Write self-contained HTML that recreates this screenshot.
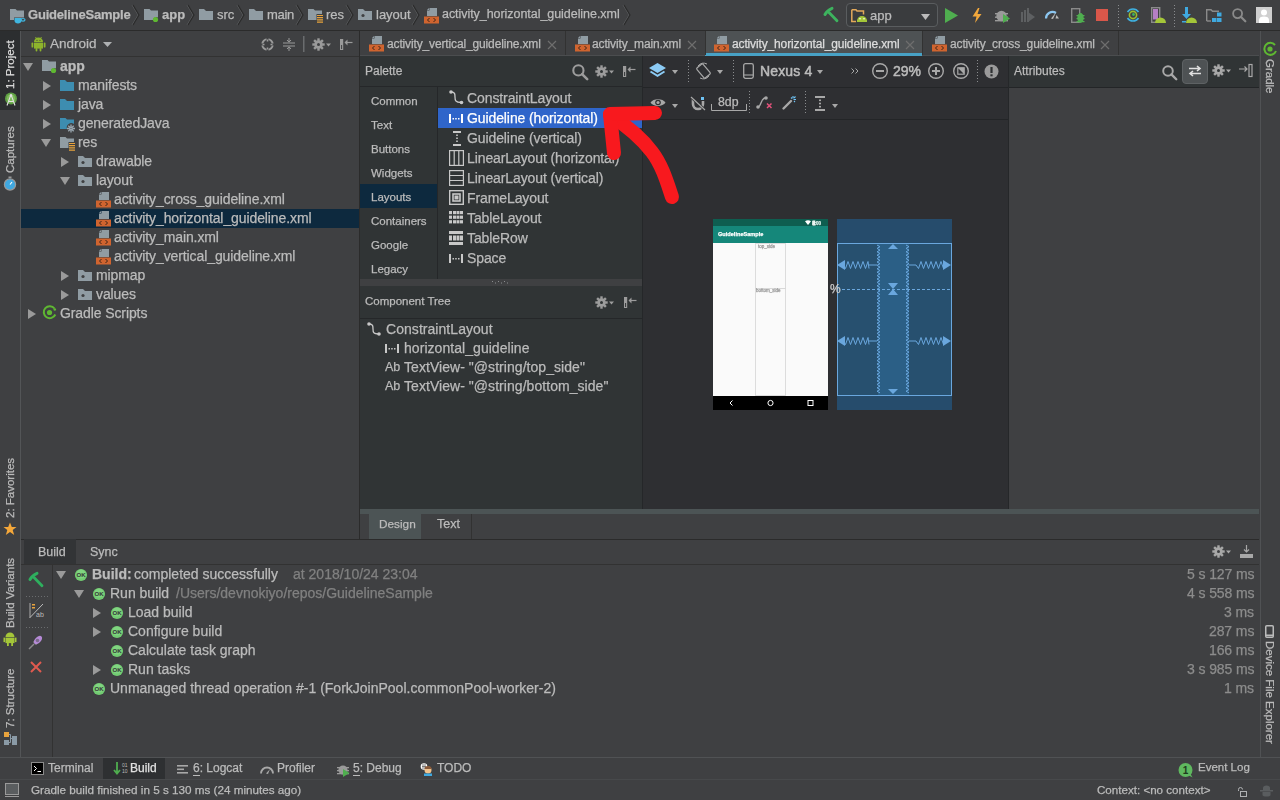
<!DOCTYPE html>
<html><head><meta charset="utf-8">
<style>
*{margin:0;padding:0;box-sizing:border-box}
html,body{width:1280px;height:800px;overflow:hidden;background:#3F4042;font-family:"Liberation Sans",sans-serif;color:#BBBBBB}
.a{position:absolute}
.t{position:absolute;white-space:nowrap;line-height:1;z-index:5;-webkit-text-stroke:0.25px currentColor;will-change:transform}
svg{position:absolute;overflow:visible}
</style></head><body>
<div class="a" style="left:0px;top:0px;width:1280px;height:800px;background:#3F4042;"></div>
<div class="a" style="left:0px;top:30px;width:1280px;height:1px;background:#2B2B2B;"></div>
<div class="a" style="left:20px;top:31px;width:1px;height:726px;background:#535557;"></div>
<div class="a" style="left:0px;top:31px;width:20px;height:79px;background:#2C2E30;"></div>
<div class="a" style="left:21px;top:56px;width:338px;height:1px;background:#323232;"></div>
<div class="a" style="left:359px;top:31px;width:1px;height:508px;background:#2B2B2B;"></div>
<div class="a" style="left:21px;top:209px;width:338px;height:19px;background:#0D293E;"></div>
<div class="a" style="left:360px;top:55px;width:899px;height:1px;background:#4B4D4F;"></div>
<div class="a" style="left:360px;top:56px;width:282px;height:223px;background:#303435;"></div>
<div class="a" style="left:360px;top:86px;width:282px;height:1px;background:#252729;"></div>
<div class="a" style="left:437px;top:87px;width:1px;height:192px;background:#252729;"></div>
<div class="a" style="left:360px;top:279px;width:282px;height:7px;background:#3F4042;"></div>
<div class="a" style="left:360px;top:286px;width:282px;height:224px;background:#303435;"></div>
<div class="a" style="left:360px;top:318px;width:282px;height:1px;background:#252729;"></div>
<div class="a" style="left:642px;top:56px;width:1px;height:454px;background:#252729;"></div>
<div class="a" style="left:643px;top:56px;width:365px;height:454px;background:#2E2F32;"></div>
<div class="a" style="left:1008px;top:56px;width:1px;height:454px;background:#252729;"></div>
<div class="a" style="left:1009px;top:56px;width:250px;height:454px;background:#3F4042;"></div>
<div class="a" style="left:1260px;top:31px;width:1px;height:726px;background:#505254;"></div>
<div class="a" style="left:360px;top:509px;width:899px;height:5px;background:#4C5455;"></div>
<div class="a" style="left:369px;top:514px;width:52px;height:25px;background:#4C5455;"></div>
<div class="a" style="left:471px;top:514px;width:1px;height:25px;background:#323232;"></div>
<div class="a" style="left:21px;top:539px;width:1238px;height:1px;background:#2B2B2B;"></div>
<div class="a" style="left:21px;top:564px;width:1238px;height:1px;background:#323232;"></div>
<div class="a" style="left:52px;top:565px;width:1px;height:192px;background:#323232;"></div>
<div class="a" style="left:0px;top:757px;width:1280px;height:1px;background:#505254;"></div>
<div class="a" style="left:0px;top:779px;width:1280px;height:1px;background:#47494B;"></div>
<div class="t" style="left:28px;top:8.00px;font-size:13px;color:#BBBBBB;font-weight:700;letter-spacing:-0.2px;">GuidelineSample</div>
<div class="t" style="left:162px;top:8.00px;font-size:13px;color:#BBBBBB;font-weight:700;letter-spacing:0px;">app</div>
<div class="t" style="left:217px;top:8.00px;font-size:13px;color:#BBBBBB;font-weight:400;letter-spacing:0px;">src</div>
<div class="t" style="left:267px;top:8.00px;font-size:13px;color:#BBBBBB;font-weight:400;letter-spacing:-0.3px;">main</div>
<div class="t" style="left:326px;top:8.00px;font-size:13px;color:#BBBBBB;font-weight:400;letter-spacing:0px;">res</div>
<div class="t" style="left:376px;top:8.00px;font-size:13px;color:#BBBBBB;font-weight:400;letter-spacing:0px;">layout</div>
<div class="t" style="left:442px;top:8.42px;font-size:12.5px;color:#BBBBBB;font-weight:400;letter-spacing:-0.05px;">activity_horizontal_guideline.xml</div>
<div class="t" style="left:870px;top:9.00px;font-size:13px;color:#BBBBBB;font-weight:400;letter-spacing:0px;">app</div>
<div class="t" style="left:5.25px;top:89px;font-size:11.5px;line-height:11.5px;color:#DDDDDD;font-weight:400;letter-spacing:0px;transform-origin:0 0;transform:rotate(-90deg) translateY(0)">1: Project</div>
<div class="t" style="left:5.25px;top:173px;font-size:11.5px;line-height:11.5px;color:#BBBBBB;font-weight:400;letter-spacing:0px;transform-origin:0 0;transform:rotate(-90deg) translateY(0)">Captures</div>
<div class="t" style="left:5.25px;top:518px;font-size:11.5px;line-height:11.5px;color:#BBBBBB;font-weight:400;letter-spacing:0px;transform-origin:0 0;transform:rotate(-90deg) translateY(0)">2: Favorites</div>
<div class="t" style="left:5.25px;top:628px;font-size:11.5px;line-height:11.5px;color:#BBBBBB;font-weight:400;letter-spacing:0px;transform-origin:0 0;transform:rotate(-90deg) translateY(0)">Build Variants</div>
<div class="t" style="left:5.25px;top:728px;font-size:11.5px;line-height:11.5px;color:#BBBBBB;font-weight:400;letter-spacing:0px;transform-origin:0 0;transform:rotate(-90deg) translateY(0)">7: Structure</div>
<div class="t" style="left:1274.75px;top:59px;font-size:11.5px;line-height:11.5px;color:#BBBBBB;font-weight:400;letter-spacing:0px;transform-origin:0 0;transform:rotate(90deg)">Gradle</div>
<div class="t" style="left:1274.75px;top:641px;font-size:11.5px;line-height:11.5px;color:#BBBBBB;font-weight:400;letter-spacing:0px;transform-origin:0 0;transform:rotate(90deg)">Device File Explorer</div>
<div class="t" style="left:50px;top:36.57px;font-size:13.5px;color:#BBBBBB;font-weight:400;letter-spacing:0px;">Android</div>
<div class="t" style="left:60px;top:59.15px;font-size:14px;color:#BBBBBB;font-weight:700;letter-spacing:0px;">app</div>
<div class="t" style="left:78px;top:78.15px;font-size:14px;color:#BBBBBB;font-weight:400;letter-spacing:-0.1px;">manifests</div>
<div class="t" style="left:78px;top:97.15px;font-size:14px;color:#BBBBBB;font-weight:400;letter-spacing:-0.1px;">java</div>
<div class="t" style="left:78px;top:116.15px;font-size:14px;color:#BBBBBB;font-weight:400;letter-spacing:-0.1px;">generatedJava</div>
<div class="t" style="left:78px;top:135.15px;font-size:14px;color:#BBBBBB;font-weight:400;letter-spacing:-0.1px;">res</div>
<div class="t" style="left:96px;top:154.15px;font-size:14px;color:#BBBBBB;font-weight:400;letter-spacing:-0.1px;">drawable</div>
<div class="t" style="left:96px;top:173.15px;font-size:14px;color:#BBBBBB;font-weight:400;letter-spacing:-0.1px;">layout</div>
<div class="t" style="left:114px;top:192.15px;font-size:14px;color:#BBBBBB;font-weight:400;letter-spacing:-0.1px;">activity_cross_guideline.xml</div>
<div class="t" style="left:114px;top:211.15px;font-size:14px;color:#BBBBBB;font-weight:400;letter-spacing:-0.1px;">activity_horizontal_guideline.xml</div>
<div class="t" style="left:114px;top:230.15px;font-size:14px;color:#BBBBBB;font-weight:400;letter-spacing:-0.1px;">activity_main.xml</div>
<div class="t" style="left:114px;top:249.15px;font-size:14px;color:#BBBBBB;font-weight:400;letter-spacing:-0.1px;">activity_vertical_guideline.xml</div>
<div class="t" style="left:96px;top:268.15px;font-size:14px;color:#BBBBBB;font-weight:400;letter-spacing:-0.1px;">mipmap</div>
<div class="t" style="left:96px;top:287.15px;font-size:14px;color:#BBBBBB;font-weight:400;letter-spacing:-0.1px;">values</div>
<div class="t" style="left:60px;top:306.15px;font-size:14px;color:#BBBBBB;font-weight:400;letter-spacing:-0.1px;">Gradle Scripts</div>
<div class="a" style="left:705px;top:31px;width:217px;height:24px;background:#4E5254;"></div>
<div class="a" style="left:705px;top:53px;width:217px;height:3px;background:#48A2C6;"></div>
<div class="a" style="left:565px;top:31px;width:1px;height:24px;background:#323232;"></div>
<div class="a" style="left:705px;top:31px;width:1px;height:24px;background:#323232;"></div>
<div class="a" style="left:922px;top:31px;width:1px;height:24px;background:#323232;"></div>
<div class="a" style="left:1118px;top:31px;width:1px;height:24px;background:#323232;"></div>
<div class="t" style="left:387px;top:37.84px;font-size:12px;color:#BBBBBB;font-weight:400;letter-spacing:-0.14px;">activity_vertical_guideline.xml</div>
<div class="t" style="left:592px;top:37.84px;font-size:12px;color:#BBBBBB;font-weight:400;letter-spacing:-0.14px;">activity_main.xml</div>
<div class="t" style="left:732px;top:37.84px;font-size:12px;color:#DDDDDD;font-weight:400;letter-spacing:-0.14px;">activity_horizontal_guideline.xml</div>
<div class="t" style="left:950px;top:37.84px;font-size:12px;color:#BBBBBB;font-weight:400;letter-spacing:-0.14px;">activity_cross_guideline.xml</div>
<div class="t" style="left:365px;top:64.84px;font-size:12px;color:#BBBBBB;font-weight:400;letter-spacing:0px;">Palette</div>
<div class="a" style="left:360px;top:184px;width:77px;height:24px;background:#0D293E;"></div>
<div class="t" style="left:371px;top:95.77px;font-size:11.5px;color:#BBBBBB;font-weight:400;letter-spacing:0px;">Common</div>
<div class="t" style="left:371px;top:119.77px;font-size:11.5px;color:#BBBBBB;font-weight:400;letter-spacing:0px;">Text</div>
<div class="t" style="left:371px;top:143.77px;font-size:11.5px;color:#BBBBBB;font-weight:400;letter-spacing:0px;">Buttons</div>
<div class="t" style="left:371px;top:167.77px;font-size:11.5px;color:#BBBBBB;font-weight:400;letter-spacing:0px;">Widgets</div>
<div class="t" style="left:371px;top:191.77px;font-size:11.5px;color:#BBBBBB;font-weight:400;letter-spacing:0px;">Layouts</div>
<div class="t" style="left:371px;top:215.77px;font-size:11.5px;color:#BBBBBB;font-weight:400;letter-spacing:0px;">Containers</div>
<div class="t" style="left:371px;top:239.77px;font-size:11.5px;color:#BBBBBB;font-weight:400;letter-spacing:0px;">Google</div>
<div class="t" style="left:371px;top:263.77px;font-size:11.5px;color:#BBBBBB;font-weight:400;letter-spacing:0px;">Legacy</div>
<div class="a" style="left:438px;top:108px;width:204px;height:20px;background:#2F65CA;"></div>
<div class="t" style="left:467px;top:91.15px;font-size:14px;color:#BBBBBB;font-weight:400;letter-spacing:-0.1px;">ConstraintLayout</div>
<div class="t" style="left:467px;top:111.15px;font-size:14px;color:#FFFFFF;font-weight:400;letter-spacing:-0.1px;">Guideline (horizontal)</div>
<div class="t" style="left:467px;top:131.15px;font-size:14px;color:#BBBBBB;font-weight:400;letter-spacing:-0.1px;">Guideline (vertical)</div>
<div class="t" style="left:467px;top:151.15px;font-size:14px;color:#BBBBBB;font-weight:400;letter-spacing:-0.1px;">LinearLayout (horizontal)</div>
<div class="t" style="left:467px;top:171.15px;font-size:14px;color:#BBBBBB;font-weight:400;letter-spacing:-0.1px;">LinearLayout (vertical)</div>
<div class="t" style="left:467px;top:191.15px;font-size:14px;color:#BBBBBB;font-weight:400;letter-spacing:-0.1px;">FrameLayout</div>
<div class="t" style="left:467px;top:211.15px;font-size:14px;color:#BBBBBB;font-weight:400;letter-spacing:-0.1px;">TableLayout</div>
<div class="t" style="left:467px;top:231.15px;font-size:14px;color:#BBBBBB;font-weight:400;letter-spacing:-0.1px;">TableRow</div>
<div class="t" style="left:467px;top:251.15px;font-size:14px;color:#BBBBBB;font-weight:400;letter-spacing:-0.1px;">Space</div>
<div class="t" style="left:365px;top:296.27px;font-size:11.5px;color:#BBBBBB;font-weight:400;letter-spacing:0px;">Component Tree</div>
<div class="t" style="left:386px;top:322.15px;font-size:14px;color:#BBBBBB;font-weight:400;letter-spacing:0.05px;">ConstraintLayout</div>
<div class="t" style="left:404px;top:341.15px;font-size:14px;color:#BBBBBB;font-weight:400;letter-spacing:0.05px;">horizontal_guideline</div>
<div class="t" style="left:385px;top:361.42px;font-size:12.5px;color:#BBBBBB;font-weight:400;letter-spacing:0px;">Ab</div>
<div class="t" style="left:404px;top:360.15px;font-size:14px;color:#BBBBBB;font-weight:400;letter-spacing:0.05px;">TextView- "@string/top_side"</div>
<div class="t" style="left:385px;top:380.42px;font-size:12.5px;color:#BBBBBB;font-weight:400;letter-spacing:0px;">Ab</div>
<div class="t" style="left:404px;top:379.15px;font-size:14px;color:#BBBBBB;font-weight:400;letter-spacing:0.05px;">TextView- "@string/bottom_side"</div>
<div class="t" style="left:760px;top:64.15px;font-size:14px;color:#BBBBBB;font-weight:400;letter-spacing:0.15px;-webkit-text-stroke:0.5px currentColor">Nexus 4</div>
<div class="t" style="left:893px;top:64.15px;font-size:14px;color:#BBBBBB;font-weight:400;letter-spacing:0px;-webkit-text-stroke:0.5px currentColor">29%</div>
<div class="t" style="left:718px;top:95.59px;font-size:12.3px;color:#BBBBBB;font-weight:400;letter-spacing:0px;">8dp</div>
<div class="t" style="left:1014px;top:64.84px;font-size:12px;color:#BBBBBB;font-weight:400;letter-spacing:0px;">Attributes</div>
<div class="t" style="left:379px;top:519.01px;font-size:11.8px;color:#BBBBBB;font-weight:400;letter-spacing:0px;">Design</div>
<div class="t" style="left:437px;top:518.42px;font-size:12.5px;color:#BBBBBB;font-weight:400;letter-spacing:0px;">Text</div>
<div class="a" style="left:24px;top:539px;width:52px;height:25px;background:#323436;"></div>
<div class="t" style="left:38px;top:546.42px;font-size:12.5px;color:#BBBBBB;font-weight:400;letter-spacing:0px;">Build</div>
<div class="t" style="left:90px;top:546.42px;font-size:12.5px;color:#BBBBBB;font-weight:400;letter-spacing:0px;">Sync</div>
<div class="t" style="left:92px;top:567.15px;font-size:14px;color:#BBBBBB;font-weight:700;letter-spacing:0px;">Build:</div>
<div class="t" style="left:134px;top:567.15px;font-size:14px;color:#BBBBBB;font-weight:400;letter-spacing:0px;">completed successfully</div>
<div class="t" style="left:293px;top:567.15px;font-size:14px;color:#808080;font-weight:400;letter-spacing:0px;">at 2018/10/24 23:04</div>
<div class="t" style="left:110px;top:586.15px;font-size:14px;color:#BBBBBB;font-weight:400;letter-spacing:0px;">Run build</div>
<div class="t" style="left:176px;top:586.15px;font-size:14px;color:#808080;font-weight:400;letter-spacing:0px;">/Users/devnokiyo/repos/GuidelineSample</div>
<div class="t" style="left:128px;top:605.15px;font-size:14px;color:#BBBBBB;font-weight:400;letter-spacing:0px;">Load build</div>
<div class="t" style="left:128px;top:624.15px;font-size:14px;color:#BBBBBB;font-weight:400;letter-spacing:0px;">Configure build</div>
<div class="t" style="left:128px;top:643.15px;font-size:14px;color:#BBBBBB;font-weight:400;letter-spacing:0px;">Calculate task graph</div>
<div class="t" style="left:128px;top:662.15px;font-size:14px;color:#BBBBBB;font-weight:400;letter-spacing:0px;">Run tasks</div>
<div class="t" style="left:110px;top:681.15px;font-size:14px;color:#BBBBBB;font-weight:400;letter-spacing:0px;">Unmanaged thread operation #-1 (ForkJoinPool.commonPool-worker-2)</div>
<div class="t" style="right:26px;top:567.15px;font-size:14px;color:#8C8C8C;font-weight:400;letter-spacing:-0.1px">5 s 127 ms</div>
<div class="t" style="right:26px;top:586.15px;font-size:14px;color:#8C8C8C;font-weight:400;letter-spacing:-0.1px">4 s 558 ms</div>
<div class="t" style="right:26px;top:605.15px;font-size:14px;color:#8C8C8C;font-weight:400;letter-spacing:-0.1px">3 ms</div>
<div class="t" style="right:26px;top:624.15px;font-size:14px;color:#8C8C8C;font-weight:400;letter-spacing:-0.1px">287 ms</div>
<div class="t" style="right:26px;top:643.15px;font-size:14px;color:#8C8C8C;font-weight:400;letter-spacing:-0.1px">166 ms</div>
<div class="t" style="right:26px;top:662.15px;font-size:14px;color:#8C8C8C;font-weight:400;letter-spacing:-0.1px">3 s 985 ms</div>
<div class="t" style="right:26px;top:681.15px;font-size:14px;color:#8C8C8C;font-weight:400;letter-spacing:-0.1px">1 ms</div>
<div class="a" style="left:103px;top:758px;width:62px;height:21px;background:#2E3032;"></div>
<div class="t" style="left:48px;top:761.84px;font-size:12px;color:#BBBBBB;font-weight:400;letter-spacing:0px;">Terminal</div>
<div class="t" style="left:130px;top:761.84px;font-size:12px;color:#E0E0E0;font-weight:400;letter-spacing:0px;">Build</div>
<div class="t" style="left:193px;top:761.84px;font-size:12px;color:#BBBBBB;font-weight:400;letter-spacing:0px;">6: Logcat</div>
<div class="t" style="left:277px;top:761.84px;font-size:12px;color:#BBBBBB;font-weight:400;letter-spacing:0px;">Profiler</div>
<div class="t" style="left:353px;top:761.84px;font-size:12px;color:#BBBBBB;font-weight:400;letter-spacing:0px;">5: Debug</div>
<div class="t" style="left:437px;top:761.84px;font-size:12px;color:#BBBBBB;font-weight:400;letter-spacing:0px;">TODO</div>
<div class="t" style="left:1198px;top:762.27px;font-size:11.5px;color:#BBBBBB;font-weight:400;letter-spacing:0px;">Event Log</div>
<div class="t" style="left:31px;top:784.10px;font-size:11.7px;color:#BBBBBB;font-weight:400;letter-spacing:0px;">Gradle build finished in 5 s 130 ms (24 minutes ago)</div>
<div class="t" style="left:1097px;top:784.18px;font-size:11.6px;color:#BBBBBB;font-weight:400;letter-spacing:0px;">Context: &lt;no context&gt;</div>
<svg style="left:10px;top:9px" width="16" height="15" viewBox="0 0 16 15"><path d="M0 0H5.5L7 1.5H14V8.5H4V11H0Z" fill="#909CA3"/><path d="M4.5 9H11.5V11.5C11.5 13.5 10 14.5 8 14.5S4.5 13.5 4.5 11.5Z" fill="#40B6E0"/><ellipse cx="13" cy="10.8" rx="2" ry="1.3" fill="none" stroke="#40B6E0" stroke-width="1.2"/></svg>
<svg style="left:131.5px;top:5px" width="8" height="20" viewBox="0 0 8 20"><path d="M0 0L6 10.0L0 20" stroke="#56585A" stroke-width="1" fill="none"/><path d="M1 0L7 10.0L1 20" stroke="#2A2A2A" stroke-width="1.1" fill="none"/></svg>
<svg style="left:144px;top:9px" width="16" height="14" viewBox="0 0 16 14"><path d="M0 0H5.5L7 1.5H14V8.5A3.5 3.5 0 0 0 9 11H0Z" fill="#909CA3"/><circle cx="11.5" cy="10.5" r="2.6" fill="#5FB832"/></svg>
<svg style="left:186.5px;top:5px" width="8" height="20" viewBox="0 0 8 20"><path d="M0 0L6 10.0L0 20" stroke="#56585A" stroke-width="1" fill="none"/><path d="M1 0L7 10.0L1 20" stroke="#2A2A2A" stroke-width="1.1" fill="none"/></svg>
<svg style="left:199px;top:9px" width="14" height="11" viewBox="0 0 14 11"><path d="M0 0H5L7 2H14V11H0Z" fill="#909CA3"/></svg>
<svg style="left:236.5px;top:5px" width="8" height="20" viewBox="0 0 8 20"><path d="M0 0L6 10.0L0 20" stroke="#56585A" stroke-width="1" fill="none"/><path d="M1 0L7 10.0L1 20" stroke="#2A2A2A" stroke-width="1.1" fill="none"/></svg>
<svg style="left:249px;top:9px" width="14" height="11" viewBox="0 0 14 11"><path d="M0 0H5L7 2H14V11H0Z" fill="#909CA3"/></svg>
<svg style="left:295.5px;top:5px" width="8" height="20" viewBox="0 0 8 20"><path d="M0 0L6 10.0L0 20" stroke="#56585A" stroke-width="1" fill="none"/><path d="M1 0L7 10.0L1 20" stroke="#2A2A2A" stroke-width="1.1" fill="none"/></svg>
<svg style="left:308px;top:9px" width="16" height="15" viewBox="0 0 16 15"><path d="M0 0H5.5L7 1.5H14V5H8.5V11H0Z" fill="#909CA3"/><path d="M9 6.5H15M9 8.7H15M9 10.9H15M9 13.1H15" stroke="#E8A33D" stroke-width="1.2"/></svg>
<svg style="left:346px;top:5px" width="8" height="20" viewBox="0 0 8 20"><path d="M0 0L6 10.0L0 20" stroke="#56585A" stroke-width="1" fill="none"/><path d="M1 0L7 10.0L1 20" stroke="#2A2A2A" stroke-width="1.1" fill="none"/></svg>
<svg style="left:358px;top:9px" width="14" height="11" viewBox="0 0 14 11"><path d="M0 0H5L7 2H14V11H0Z" fill="#909CA3"/></svg>
<svg style="left:358px;top:9px" width="14" height="11" viewBox="0 0 14 11"><circle cx="5" cy="6.5" r="1.6" fill="#3F4042"/></svg>
<svg style="left:411.5px;top:5px" width="8" height="20" viewBox="0 0 8 20"><path d="M0 0L6 10.0L0 20" stroke="#56585A" stroke-width="1" fill="none"/><path d="M1 0L7 10.0L1 20" stroke="#2A2A2A" stroke-width="1.1" fill="none"/></svg>
<svg style="left:424px;top:8px" width="15" height="16" viewBox="0 0 15 16"><path d="M5.5 0H13V8H3V2.5L5.5 2.5Z" fill="#909CA3"/><path d="M3 2L5 0V2Z" fill="#909CA3"/><rect x="0" y="8.5" width="15" height="7" fill="#D0642F"/><path d="M5.5 10L3.5 12L5.5 14M9.5 10L11.5 12L9.5 14" stroke="#3A2418" stroke-width="1" fill="none"/></svg>
<svg style="left:623px;top:5px" width="8" height="20" viewBox="0 0 8 20"><path d="M0 0L6 10.0L0 20" stroke="#56585A" stroke-width="1" fill="none"/><path d="M1 0L7 10.0L1 20" stroke="#2A2A2A" stroke-width="1.1" fill="none"/></svg>
<svg style="left:823px;top:7px" width="16" height="17" viewBox="0 0 16 17"><path d="M6 5.5L14 13.8" stroke="#3DB35E" stroke-width="2.8" stroke-linecap="round"/><path d="M2 7.5Q4.5 3 9 1.3" stroke="#3DB35E" stroke-width="3" stroke-linecap="round" fill="none"/></svg>
<div class="a" style="left:846px;top:3px;width:92px;height:24px;background:#3A3C3E;border:1px solid #5A5D5F;border-radius:4px"></div>
<svg style="left:851px;top:9px" width="17" height="14" viewBox="0 0 17 14"><path d="M0.8 0.8H5L6 2H12.5V5.5M5 12.5H0.8V0.8" stroke="#E3A95A" stroke-width="1.5" fill="none"/></svg>
<svg style="left:857px;top:15px" width="10" height="6.0" viewBox="0 0 10 6.0"><path d="M0 6.0A5.0 5.0 0 0 1 10 6.0Z" fill="#A4C639"/><circle cx="3.0" cy="3.8" r="0.8" fill="#fff"/><circle cx="7.0" cy="3.8" r="0.8" fill="#fff"/></svg>
<svg style="left:857px;top:20px" width="10" height="2" viewBox="0 0 10 2"><rect width="10" height="2" fill="#A4C639"/></svg>
<svg style="left:921px;top:14px" width="9" height="6" viewBox="0 0 9 6"><path d="M0 0H9L4.5 6Z" fill="#BBBBBB"/></svg>
<svg style="left:945px;top:8px" width="13" height="15" viewBox="0 0 13 15"><path d="M0 0L13 7.5L0 15Z" fill="#4FAE4F"/></svg>
<svg style="left:972px;top:8px" width="10" height="15" viewBox="0 0 10 15"><path d="M6 0L0.5 8.5H4.5L3 15L9.5 6H5.5L7.5 0Z" fill="#F2A83C"/></svg>
<svg style="left:995px;top:8px" width="16" height="15" viewBox="0 0 16 15"><g fill="#9A9A9A"><circle cx="6.5" cy="8" r="5.2"/><rect x="0" y="5" width="13" height="1.4"/><rect x="0" y="8.5" width="13" height="1.4"/><rect x="0" y="12" width="13" height="1.4"/></g><path d="M8 6L15 10.5L8 15Z" fill="#4FAE4F"/></svg>
<svg style="left:1021px;top:8px" width="14" height="15" viewBox="0 0 14 15"><g fill="#5E6062"><rect x="0" y="4" width="2" height="10"/><rect x="3" y="2" width="2" height="12"/><rect x="6" y="0" width="2" height="14"/><path d="M7 4L14 9L7 14Z"/></g></svg>
<svg style="left:1045px;top:10px" width="15" height="9" viewBox="0 0 15 9"><path d="M1 8.5A6.5 6.5 0 0 1 11 3" stroke="#8CC6F0" stroke-width="2.2" fill="none"/><path d="M6 8.5L11 2.5L8 9Z" fill="#BBBBBB"/><path d="M11.5 5L14 8.5H10.5Z" fill="#BBBBBB"/></svg>
<svg style="left:1071px;top:8px" width="14" height="16" viewBox="0 0 14 16"><rect x="0.7" y="0.7" width="8" height="13.6" fill="none" stroke="#8A8A8A" stroke-width="1.4"/><g fill="#4FAE4F"><ellipse cx="9.5" cy="10" rx="3.2" ry="5"/><rect x="5.5" y="7" width="8" height="1.2"/><rect x="5.5" y="10" width="8" height="1.2"/><rect x="5.5" y="13" width="8" height="1.2"/></g></svg>
<div class="a" style="left:1096px;top:9px;width:12px;height:12px;background:#D9574A;"></div>
<svg style="left:1118px;top:5px" width="2" height="22" viewBox="0 0 2 22"><path d="M0.5 0V22" stroke="#8A8C8E" stroke-width="1" stroke-dasharray="1 2"/></svg>
<svg style="left:1174px;top:5px" width="2" height="22" viewBox="0 0 2 22"><path d="M0.5 0V22" stroke="#8A8C8E" stroke-width="1" stroke-dasharray="1 2"/></svg>
<svg style="left:1126px;top:8px" width="14" height="14" viewBox="0 0 14 14"><path d="M1.5 4A6.5 6.5 0 0 1 12.5 4" stroke="#3FB0E0" stroke-width="1.6" fill="none"/><path d="M1.5 10A6.5 6.5 0 0 0 12.5 10" stroke="#3FB0E0" stroke-width="1.6" fill="none"/><circle cx="7" cy="7" r="3.6" stroke="#9BBD2C" stroke-width="1.6" fill="none"/><circle cx="7.5" cy="6.5" r="1.4" fill="#3DB35E"/></svg>
<svg style="left:1151px;top:7px" width="15" height="16" viewBox="0 0 15 16"><rect x="0.7" y="0.7" width="8" height="14.6" fill="none" stroke="#8A8A8A" stroke-width="1.4"/><rect x="2" y="2" width="5" height="10.5" fill="#B57FC4"/></svg>
<svg style="left:1155px;top:17px" width="11" height="6" viewBox="0 0 11 6"><path d="M0 6A5.5 5.5 0 0 1 11 6Z" fill="#A4C639"/></svg>
<svg style="left:1182px;top:7px" width="15" height="16" viewBox="0 0 15 16"><path d="M3 0H6V7H9L4.5 12L0 7H3Z" fill="#3FA9E0"/><rect x="0" y="14" width="4" height="1.5" fill="#3FA9E0"/></svg>
<svg style="left:1186px;top:17px" width="11" height="6" viewBox="0 0 11 6"><path d="M0 6A5.5 5.5 0 0 1 11 6Z" fill="#A4C639"/></svg>
<svg style="left:1206px;top:9px" width="17" height="14" viewBox="0 0 17 14"><path d="M0.7 12V0.7H5L6.5 2.2H13" stroke="#8A8A8A" stroke-width="1.4" fill="none"/><path d="M0.7 12H5" stroke="#8A8A8A" stroke-width="1.4"/><g fill="#3FA9E0"><rect x="11" y="3.5" width="4.5" height="4"/><rect x="6" y="9" width="4.5" height="4"/><rect x="11" y="9" width="4.5" height="4"/></g></svg>
<svg style="left:1232px;top:8px" width="14" height="14" viewBox="0 0 14 14"><circle cx="5.6000000000000005" cy="5.6000000000000005" r="4.48" stroke="#8A8A8A" stroke-width="1.82" fill="none"/><path d="M8.82 8.82L13.299999999999999 13.299999999999999" stroke="#8A8A8A" stroke-width="2.24" stroke-linecap="round"/></svg>
<svg style="left:1256px;top:7px" width="16" height="16" viewBox="0 0 16 16"><rect width="16" height="16" fill="#CFCFCF"/><circle cx="8" cy="5.5" r="3" fill="#fff"/><path d="M3 16V13C3 10.5 5 9.5 8 9.5S13 10.5 13 13V16Z" fill="#fff"/></svg>
<svg style="left:31px;top:36px" width="15" height="16" viewBox="0 0 15 16"><path d="M3 6A4.5 4.5 0 0 1 12 6Z" fill="#8DB32C"/><rect x="3" y="6.6" width="9" height="6" fill="#8DB32C"/><rect x="0.5" y="6.6" width="1.8" height="5" rx="0.9" fill="#8DB32C"/><rect x="12.7" y="6.6" width="1.8" height="5" rx="0.9" fill="#8DB32C"/><rect x="4.6" y="12" width="1.8" height="3.5" rx="0.9" fill="#8DB32C"/><rect x="8.6" y="12" width="1.8" height="3.5" rx="0.9" fill="#8DB32C"/><path d="M4.5 1L5.8 3.2M10.5 1L9.2 3.2" stroke="#8DB32C" stroke-width="0.9"/><circle cx="6" cy="4.3" r="0.6" fill="#3F4042"/><circle cx="9" cy="4.3" r="0.6" fill="#3F4042"/></svg>
<svg style="left:103px;top:42px" width="9" height="5" viewBox="0 0 9 5"><path d="M0 0H9L4.5 5Z" fill="#AFB1B3"/></svg>
<svg style="left:261px;top:38px" width="13" height="13" viewBox="0 0 13 13"><circle cx="6.5" cy="6.5" r="5.3" stroke="#9A9A9A" stroke-width="1.8" fill="none"/><g stroke="#3F4042" stroke-width="2"><path d="M6.5 0V3M6.5 10V13M0 6.5H3M10 6.5H13"/></g><g stroke="#9A9A9A" stroke-width="1.6"><path d="M6.5 1.5V3.5M6.5 9.5V11.5M1.5 6.5H3.5M9.5 6.5H11.5"/></g></svg>
<svg style="left:283px;top:38px" width="12" height="13" viewBox="0 0 12 13"><path d="M0 5H12M0 8H12" stroke="#9A9A9A" stroke-width="1"/><path d="M6 0V4M4 2L6 4.2L8 2M6 13V9M4 11L6 8.8L8 11" stroke="#9A9A9A" stroke-width="1" fill="none"/></svg>
<svg style="left:303px;top:36px" width="2" height="16" viewBox="0 0 2 16"><rect width="1.5" height="16" fill="#6A6C6E"/></svg>
<svg style="left:312px;top:38px" width="20" height="13" viewBox="0 0 20 13"><rect x="5.3" y="0.3" width="2.4" height="2.6" fill="#9A9A9A" transform="rotate(0 6.5 6.5)"/><rect x="5.3" y="0.3" width="2.4" height="2.6" fill="#9A9A9A" transform="rotate(45 6.5 6.5)"/><rect x="5.3" y="0.3" width="2.4" height="2.6" fill="#9A9A9A" transform="rotate(90 6.5 6.5)"/><rect x="5.3" y="0.3" width="2.4" height="2.6" fill="#9A9A9A" transform="rotate(135 6.5 6.5)"/><rect x="5.3" y="0.3" width="2.4" height="2.6" fill="#9A9A9A" transform="rotate(180 6.5 6.5)"/><rect x="5.3" y="0.3" width="2.4" height="2.6" fill="#9A9A9A" transform="rotate(225 6.5 6.5)"/><rect x="5.3" y="0.3" width="2.4" height="2.6" fill="#9A9A9A" transform="rotate(270 6.5 6.5)"/><rect x="5.3" y="0.3" width="2.4" height="2.6" fill="#9A9A9A" transform="rotate(315 6.5 6.5)"/><circle cx="6.5" cy="6.5" r="4.3" fill="#9A9A9A"/><circle cx="6.5" cy="6.5" r="1.5" fill="#3F4042"/><path d="M14 5.5H19L16.5 8.5Z" fill="#9A9A9A"/></svg>
<svg style="left:340px;top:39px" width="13" height="12" viewBox="0 0 13 12"><rect x="0" y="0" width="3.2" height="11" fill="#9A9A9A"/><rect x="1.1" y="6" width="1" height="4" fill="#3F4042"/><path d="M6 3.5H12.5" stroke="#9A9A9A" stroke-width="1.2"/><path d="M4.5 3.5L7.5 0.5V6.5Z" fill="#9A9A9A"/></svg>
<svg style="left:23px;top:63px" width="10" height="8" viewBox="0 0 10 8"><path d="M0 0H10L5 8Z" fill="#9A9A9A"/></svg>
<svg style="left:42px;top:60px" width="16" height="14" viewBox="0 0 16 14"><path d="M0 0H5.5L7 1.5H14V8.5A3.5 3.5 0 0 0 9 11H0Z" fill="#909CA3"/><circle cx="11.5" cy="10.5" r="2.6" fill="#5FB832"/></svg>
<svg style="left:43px;top:81px" width="8" height="10" viewBox="0 0 8 10"><path d="M0 0L8 5L0 10Z" fill="#9A9A9A"/></svg>
<svg style="left:60px;top:80px" width="14" height="11" viewBox="0 0 14 11"><path d="M0 0H5L7 2H14V11H0Z" fill="#3D8DB0"/></svg>
<svg style="left:43px;top:100px" width="8" height="10" viewBox="0 0 8 10"><path d="M0 0L8 5L0 10Z" fill="#9A9A9A"/></svg>
<svg style="left:60px;top:99px" width="14" height="11" viewBox="0 0 14 11"><path d="M0 0H5L7 2H14V11H0Z" fill="#3D8DB0"/></svg>
<svg style="left:43px;top:119px" width="8" height="10" viewBox="0 0 8 10"><path d="M0 0L8 5L0 10Z" fill="#9A9A9A"/></svg>
<svg style="left:60px;top:118px" width="16" height="15" viewBox="0 0 16 15"><path d="M0 0H5.5L7 1.5H14V6A4.5 4.5 0 0 0 7 11H0Z" fill="#3D8DB0"/><g stroke="#9AA7B0" stroke-width="1.3" fill="none"><circle cx="11" cy="10.5" r="1.2"/><path d="M11 6.5V9M11 12V14.5M7 10.5H9.5M12.5 10.5H15M8.3 7.8L10 9.5M12 11.5L13.7 13.2M13.7 7.8L12 9.5M10 11.5L8.3 13.2"/></g></svg>
<svg style="left:41px;top:139px" width="10" height="8" viewBox="0 0 10 8"><path d="M0 0H10L5 8Z" fill="#9A9A9A"/></svg>
<svg style="left:60px;top:137px" width="16" height="15" viewBox="0 0 16 15"><path d="M0 0H5.5L7 1.5H14V5H8.5V11H0Z" fill="#909CA3"/><path d="M9 6.5H15M9 8.7H15M9 10.9H15M9 13.1H15" stroke="#E8A33D" stroke-width="1.2"/></svg>
<svg style="left:61px;top:157px" width="8" height="10" viewBox="0 0 8 10"><path d="M0 0L8 5L0 10Z" fill="#9A9A9A"/></svg>
<svg style="left:78px;top:156px" width="14" height="11" viewBox="0 0 14 11"><path d="M0 0H5L7 2H14V11H0Z" fill="#909CA3"/></svg>
<svg style="left:78px;top:156px" width="14" height="11" viewBox="0 0 14 11"><circle cx="5" cy="6.5" r="1.6" fill="#3F4042"/></svg>
<svg style="left:60px;top:177px" width="10" height="8" viewBox="0 0 10 8"><path d="M0 0H10L5 8Z" fill="#9A9A9A"/></svg>
<svg style="left:78px;top:175px" width="14" height="11" viewBox="0 0 14 11"><path d="M0 0H5L7 2H14V11H0Z" fill="#909CA3"/></svg>
<svg style="left:78px;top:175px" width="14" height="11" viewBox="0 0 14 11"><circle cx="5" cy="6.5" r="1.6" fill="#3F4042"/></svg>
<svg style="left:96px;top:192px" width="15" height="16" viewBox="0 0 15 16"><path d="M5.5 0H13V8H3V2.5L5.5 2.5Z" fill="#909CA3"/><path d="M3 2L5 0V2Z" fill="#909CA3"/><rect x="0" y="8.5" width="15" height="7" fill="#D0642F"/><path d="M5.5 10L3.5 12L5.5 14M9.5 10L11.5 12L9.5 14" stroke="#3A2418" stroke-width="1" fill="none"/></svg>
<svg style="left:96px;top:211px" width="15" height="16" viewBox="0 0 15 16"><path d="M5.5 0H13V8H3V2.5L5.5 2.5Z" fill="#909CA3"/><path d="M3 2L5 0V2Z" fill="#909CA3"/><rect x="0" y="8.5" width="15" height="7" fill="#D0642F"/><path d="M5.5 10L3.5 12L5.5 14M9.5 10L11.5 12L9.5 14" stroke="#3A2418" stroke-width="1" fill="none"/></svg>
<svg style="left:96px;top:230px" width="15" height="16" viewBox="0 0 15 16"><path d="M5.5 0H13V8H3V2.5L5.5 2.5Z" fill="#909CA3"/><path d="M3 2L5 0V2Z" fill="#909CA3"/><rect x="0" y="8.5" width="15" height="7" fill="#D0642F"/><path d="M5.5 10L3.5 12L5.5 14M9.5 10L11.5 12L9.5 14" stroke="#3A2418" stroke-width="1" fill="none"/></svg>
<svg style="left:96px;top:249px" width="15" height="16" viewBox="0 0 15 16"><path d="M5.5 0H13V8H3V2.5L5.5 2.5Z" fill="#909CA3"/><path d="M3 2L5 0V2Z" fill="#909CA3"/><rect x="0" y="8.5" width="15" height="7" fill="#D0642F"/><path d="M5.5 10L3.5 12L5.5 14M9.5 10L11.5 12L9.5 14" stroke="#3A2418" stroke-width="1" fill="none"/></svg>
<svg style="left:61px;top:271px" width="8" height="10" viewBox="0 0 8 10"><path d="M0 0L8 5L0 10Z" fill="#9A9A9A"/></svg>
<svg style="left:78px;top:270px" width="14" height="11" viewBox="0 0 14 11"><path d="M0 0H5L7 2H14V11H0Z" fill="#909CA3"/></svg>
<svg style="left:78px;top:270px" width="14" height="11" viewBox="0 0 14 11"><circle cx="5" cy="6.5" r="1.6" fill="#3F4042"/></svg>
<svg style="left:61px;top:290px" width="8" height="10" viewBox="0 0 8 10"><path d="M0 0L8 5L0 10Z" fill="#9A9A9A"/></svg>
<svg style="left:78px;top:289px" width="14" height="11" viewBox="0 0 14 11"><path d="M0 0H5L7 2H14V11H0Z" fill="#909CA3"/></svg>
<svg style="left:78px;top:289px" width="14" height="11" viewBox="0 0 14 11"><circle cx="5" cy="6.5" r="1.6" fill="#3F4042"/></svg>
<svg style="left:28px;top:309px" width="8" height="10" viewBox="0 0 8 10"><path d="M0 0L8 5L0 10Z" fill="#9A9A9A"/></svg>
<svg style="left:42px;top:305px" width="15" height="15" viewBox="0 0 15 15"><path d="M12.5 3.5A6 6 0 1 0 13.3 9.5" stroke="#5FB832" stroke-width="2" fill="none"/><circle cx="7.5" cy="7.5" r="2.6" fill="#5FB832"/><circle cx="12.8" cy="4.5" r="1.3" fill="#5FB832"/></svg>
<svg style="left:4px;top:92px" width="14" height="15" viewBox="0 0 14 15"><circle cx="7" cy="6.5" r="6" fill="#5FA044"/><circle cx="7" cy="6.5" r="4.2" fill="#7DBA5A"/><path d="M7 2.5L3 13.5M7 2.5L11 13.5M4.5 9.5H9.5" stroke="#E0E0E0" stroke-width="1.1" fill="none"/><circle cx="7" cy="3.5" r="1.3" fill="#E0E0E0"/></svg>
<svg style="left:3px;top:176px" width="14" height="15" viewBox="0 0 14 15"><circle cx="7" cy="8.5" r="5.6" fill="#40A8E0" stroke="#9A9A9A" stroke-width="1.2"/><path d="M7 8.5L9 6" stroke="#fff" stroke-width="1.2"/><rect x="5.5" y="0.5" width="3" height="1.5" fill="#9A9A9A"/></svg>
<svg style="left:3px;top:522px" width="14" height="14" viewBox="0 0 14 14"><path d="M7 0.5L8.8 5H13.5L9.7 8L11.2 13L7 10L2.8 13L4.3 8L0.5 5H5.2Z" fill="#F4A73A"/></svg>
<svg style="left:4px;top:631px" width="12" height="15" viewBox="0 0 12 15"><path d="M1.5 6A4.5 4.5 0 0 1 10.5 6Z" fill="#A4C639"/><rect x="1.5" y="6.6" width="9" height="5.5" fill="#A4C639"/><rect x="-0.5" y="6.6" width="1.6" height="4.5" fill="#A4C639"/><rect x="10.9" y="6.6" width="1.6" height="4.5" fill="#A4C639"/><rect x="3" y="11.5" width="1.8" height="3.5" fill="#A4C639"/><rect x="7.2" y="11.5" width="1.8" height="3.5" fill="#A4C639"/></svg>
<svg style="left:4px;top:732px" width="13" height="14" viewBox="0 0 13 14"><rect x="0" y="0" width="5" height="5" fill="#E8A33D"/><rect x="0" y="8" width="5" height="5" fill="#8A9AA6"/><rect x="8" y="4" width="5" height="5" fill="#8A9AA6"/><rect x="8" y="9" width="5" height="4" fill="#8A9AA6"/><path d="M5 2.5H6.5V10.5H5M6.5 6.5H8" stroke="#8A9AA6" stroke-width="1" fill="none"/></svg>
<svg style="left:1263px;top:42px" width="15" height="14" viewBox="0 0 15 14"><path d="M12 3A6 6 0 1 0 13 9" stroke="#5FB832" stroke-width="2" fill="none"/><circle cx="7" cy="7" r="2.6" fill="#5FB832"/></svg>
<svg style="left:1265px;top:625px" width="9" height="13" viewBox="0 0 9 13"><rect x="0.75" y="0.75" width="7.5" height="11.5" rx="1" fill="none" stroke="#BBBBBB" stroke-width="1.5"/><rect x="1" y="9.5" width="7" height="1.5" fill="#BBBBBB"/></svg>
<svg style="left:369px;top:36px" width="15" height="16" viewBox="0 0 15 16"><path d="M5.5 0H13V8H3V2.5L5.5 2.5Z" fill="#909CA3"/><path d="M3 2L5 0V2Z" fill="#909CA3"/><rect x="0" y="8.5" width="15" height="7" fill="#D0642F"/><path d="M5.5 10L3.5 12L5.5 14M9.5 10L11.5 12L9.5 14" stroke="#3A2418" stroke-width="1" fill="none"/></svg>
<svg style="left:575px;top:36px" width="15" height="16" viewBox="0 0 15 16"><path d="M5.5 0H13V8H3V2.5L5.5 2.5Z" fill="#909CA3"/><path d="M3 2L5 0V2Z" fill="#909CA3"/><rect x="0" y="8.5" width="15" height="7" fill="#D0642F"/><path d="M5.5 10L3.5 12L5.5 14M9.5 10L11.5 12L9.5 14" stroke="#3A2418" stroke-width="1" fill="none"/></svg>
<svg style="left:714px;top:36px" width="15" height="16" viewBox="0 0 15 16"><path d="M5.5 0H13V8H3V2.5L5.5 2.5Z" fill="#909CA3"/><path d="M3 2L5 0V2Z" fill="#909CA3"/><rect x="0" y="8.5" width="15" height="7" fill="#D0642F"/><path d="M5.5 10L3.5 12L5.5 14M9.5 10L11.5 12L9.5 14" stroke="#3A2418" stroke-width="1" fill="none"/></svg>
<svg style="left:932px;top:36px" width="15" height="16" viewBox="0 0 15 16"><path d="M5.5 0H13V8H3V2.5L5.5 2.5Z" fill="#909CA3"/><path d="M3 2L5 0V2Z" fill="#909CA3"/><rect x="0" y="8.5" width="15" height="7" fill="#D0642F"/><path d="M5.5 10L3.5 12L5.5 14M9.5 10L11.5 12L9.5 14" stroke="#3A2418" stroke-width="1" fill="none"/></svg>
<svg style="left:548px;top:41px" width="8" height="8" viewBox="0 0 8 8"><path d="M0 0L8 8M8 0L0 8" stroke="#6E6E6E" stroke-width="1.2"/></svg>
<svg style="left:688px;top:41px" width="8" height="8" viewBox="0 0 8 8"><path d="M0 0L8 8M8 0L0 8" stroke="#6E6E6E" stroke-width="1.2"/></svg>
<svg style="left:906px;top:41px" width="8" height="8" viewBox="0 0 8 8"><path d="M0 0L8 8M8 0L0 8" stroke="#6E6E6E" stroke-width="1.2"/></svg>
<svg style="left:1101px;top:41px" width="8" height="8" viewBox="0 0 8 8"><path d="M0 0L8 8M8 0L0 8" stroke="#6E6E6E" stroke-width="1.2"/></svg>
<svg style="left:572px;top:64px" width="16" height="16" viewBox="0 0 16 16"><circle cx="6.4" cy="6.4" r="5.12" stroke="#9C9C9C" stroke-width="2.08" fill="none"/><path d="M10.08 10.08L15.2 15.2" stroke="#9C9C9C" stroke-width="2.56" stroke-linecap="round"/></svg>
<svg style="left:595px;top:65px" width="20" height="13" viewBox="0 0 20 13"><rect x="5.3" y="0.3" width="2.4" height="2.6" fill="#9C9C9C" transform="rotate(0 6.5 6.5)"/><rect x="5.3" y="0.3" width="2.4" height="2.6" fill="#9C9C9C" transform="rotate(45 6.5 6.5)"/><rect x="5.3" y="0.3" width="2.4" height="2.6" fill="#9C9C9C" transform="rotate(90 6.5 6.5)"/><rect x="5.3" y="0.3" width="2.4" height="2.6" fill="#9C9C9C" transform="rotate(135 6.5 6.5)"/><rect x="5.3" y="0.3" width="2.4" height="2.6" fill="#9C9C9C" transform="rotate(180 6.5 6.5)"/><rect x="5.3" y="0.3" width="2.4" height="2.6" fill="#9C9C9C" transform="rotate(225 6.5 6.5)"/><rect x="5.3" y="0.3" width="2.4" height="2.6" fill="#9C9C9C" transform="rotate(270 6.5 6.5)"/><rect x="5.3" y="0.3" width="2.4" height="2.6" fill="#9C9C9C" transform="rotate(315 6.5 6.5)"/><circle cx="6.5" cy="6.5" r="4.3" fill="#9C9C9C"/><circle cx="6.5" cy="6.5" r="1.5" fill="#303435"/><path d="M14 5.5H19L16.5 8.5Z" fill="#9C9C9C"/></svg>
<svg style="left:623px;top:66px" width="13" height="12" viewBox="0 0 13 12"><rect x="0" y="0" width="3.2" height="11" fill="#9C9C9C"/><rect x="1.1" y="6" width="1" height="4" fill="#303435"/><path d="M6 3.5H12.5" stroke="#9C9C9C" stroke-width="1.2"/><path d="M4.5 3.5L7.5 0.5V6.5Z" fill="#9C9C9C"/></svg>
<svg style="left:449px;top:90px" width="15" height="15" viewBox="0 0 15 15"><circle cx="2" cy="2" r="1.8" fill="#C8C8C8"/><circle cx="12.5" cy="12.5" r="1.8" fill="#C8C8C8"/><path d="M2 2C6 2 6 4 6 7S6 12.5 12.5 12.5" stroke="#C8C8C8" stroke-width="1.3" fill="none"/></svg>
<svg style="left:449px;top:114px" width="14" height="9" viewBox="0 0 14 9"><rect x="0" y="0" width="2" height="9" fill="#FFFFFF"/><rect x="12" y="0" width="2" height="9" fill="#FFFFFF"/><rect x="3.5" y="4" width="1.5" height="1.5" fill="#FFFFFF"/><rect x="6.2" y="4" width="1.5" height="1.5" fill="#FFFFFF"/><rect x="9" y="4" width="1.5" height="1.5" fill="#FFFFFF"/></svg>
<svg style="left:453px;top:131px" width="8" height="15" viewBox="0 0 8 15"><rect x="0" y="0" width="8" height="2" fill="#C8C8C8"/><rect x="0" y="13" width="8" height="2" fill="#C8C8C8"/><rect x="3.2" y="3.5" width="1.6" height="1.5" fill="#C8C8C8"/><rect x="3.2" y="6.5" width="1.6" height="1.5" fill="#C8C8C8"/><rect x="3.2" y="9.5" width="1.6" height="1.5" fill="#C8C8C8"/></svg>
<svg style="left:449px;top:150px" width="15" height="16" viewBox="0 0 15 16"><rect x="0.6" y="0.6" width="13.8" height="14.8" fill="none" stroke="#C8C8C8" stroke-width="1.2"/><path d="M5.2 0.6V15.4M9.8 0.6V15.4" stroke="#C8C8C8" stroke-width="1.2"/></svg>
<svg style="left:449px;top:170px" width="15" height="16" viewBox="0 0 15 16"><rect x="0.6" y="0.6" width="13.8" height="14.8" fill="none" stroke="#C8C8C8" stroke-width="1.2"/><path d="M0.6 5.5H14.4M0.6 10.5H14.4" stroke="#C8C8C8" stroke-width="1.2"/></svg>
<svg style="left:449px;top:190px" width="15" height="15" viewBox="0 0 15 15"><rect x="0.7" y="0.7" width="13.6" height="13.6" fill="none" stroke="#C8C8C8" stroke-width="1.4"/><rect x="4" y="4" width="7" height="7" fill="none" stroke="#C8C8C8" stroke-width="1.6"/><rect x="5.5" y="5.5" width="4" height="4" fill="#C8C8C8"/></svg>
<svg style="left:449px;top:211px" width="14" height="13" viewBox="0 0 14 13"><rect x="0" y="0" width="3" height="3.2" fill="#C8C8C8"/><rect x="0" y="4.6" width="3" height="3.2" fill="#C8C8C8"/><rect x="0" y="9.2" width="3" height="3.2" fill="#C8C8C8"/><rect x="4" y="0" width="3" height="3.2" fill="#C8C8C8"/><rect x="4" y="4.6" width="3" height="3.2" fill="#C8C8C8"/><rect x="4" y="9.2" width="3" height="3.2" fill="#C8C8C8"/><rect x="7.5" y="0" width="3" height="3.2" fill="#C8C8C8"/><rect x="7.5" y="4.6" width="3" height="3.2" fill="#C8C8C8"/><rect x="7.5" y="9.2" width="3" height="3.2" fill="#C8C8C8"/><rect x="11" y="0" width="3" height="3.2" fill="#C8C8C8"/><rect x="11" y="4.6" width="3" height="3.2" fill="#C8C8C8"/><rect x="11" y="9.2" width="3" height="3.2" fill="#C8C8C8"/></svg>
<svg style="left:449px;top:231px" width="15" height="14" viewBox="0 0 15 14"><rect x="0" y="0" width="14" height="3" fill="#C8C8C8"/><rect x="0" y="11" width="14" height="3" fill="#C8C8C8"/><rect x="0" y="4.5" width="3" height="5" fill="#C8C8C8"/><rect x="4" y="4.5" width="3" height="5" fill="#C8C8C8"/><rect x="7.5" y="4.5" width="3" height="5" fill="#C8C8C8"/><rect x="11" y="4.5" width="3" height="5" fill="#C8C8C8"/></svg>
<svg style="left:449px;top:254px" width="14" height="9" viewBox="0 0 14 9"><rect x="0" y="0" width="2" height="9" fill="#C8C8C8"/><rect x="12" y="0" width="2" height="9" fill="#C8C8C8"/><rect x="3.5" y="4" width="1.5" height="1.5" fill="#C8C8C8"/><rect x="6.2" y="4" width="1.5" height="1.5" fill="#C8C8C8"/><rect x="9" y="4" width="1.5" height="1.5" fill="#C8C8C8"/></svg>
<svg style="left:595px;top:296px" width="20" height="13" viewBox="0 0 20 13"><rect x="5.3" y="0.3" width="2.4" height="2.6" fill="#9C9C9C" transform="rotate(0 6.5 6.5)"/><rect x="5.3" y="0.3" width="2.4" height="2.6" fill="#9C9C9C" transform="rotate(45 6.5 6.5)"/><rect x="5.3" y="0.3" width="2.4" height="2.6" fill="#9C9C9C" transform="rotate(90 6.5 6.5)"/><rect x="5.3" y="0.3" width="2.4" height="2.6" fill="#9C9C9C" transform="rotate(135 6.5 6.5)"/><rect x="5.3" y="0.3" width="2.4" height="2.6" fill="#9C9C9C" transform="rotate(180 6.5 6.5)"/><rect x="5.3" y="0.3" width="2.4" height="2.6" fill="#9C9C9C" transform="rotate(225 6.5 6.5)"/><rect x="5.3" y="0.3" width="2.4" height="2.6" fill="#9C9C9C" transform="rotate(270 6.5 6.5)"/><rect x="5.3" y="0.3" width="2.4" height="2.6" fill="#9C9C9C" transform="rotate(315 6.5 6.5)"/><circle cx="6.5" cy="6.5" r="4.3" fill="#9C9C9C"/><circle cx="6.5" cy="6.5" r="1.5" fill="#303435"/><path d="M14 5.5H19L16.5 8.5Z" fill="#9C9C9C"/></svg>
<svg style="left:624px;top:297px" width="13" height="12" viewBox="0 0 13 12"><rect x="0" y="0" width="3.2" height="11" fill="#9C9C9C"/><rect x="1.1" y="6" width="1" height="4" fill="#303435"/><path d="M6 3.5H12.5" stroke="#9C9C9C" stroke-width="1.2"/><path d="M4.5 3.5L7.5 0.5V6.5Z" fill="#9C9C9C"/></svg>
<svg style="left:367px;top:322px" width="15" height="15" viewBox="0 0 15 15"><circle cx="2" cy="2" r="1.8" fill="#C8C8C8"/><circle cx="12" cy="12" r="1.8" fill="#C8C8C8"/><path d="M2 2C6 2 6 4 6 7S6 12 12 12" stroke="#C8C8C8" stroke-width="1.3" fill="none"/></svg>
<svg style="left:385px;top:344px" width="14" height="9" viewBox="0 0 14 9"><rect x="0" y="0" width="2" height="9" fill="#C8C8C8"/><rect x="12" y="0" width="2" height="9" fill="#C8C8C8"/><rect x="3.5" y="4" width="1.5" height="1.5" fill="#C8C8C8"/><rect x="6.2" y="4" width="1.5" height="1.5" fill="#C8C8C8"/><rect x="9" y="4" width="1.5" height="1.5" fill="#C8C8C8"/></svg>
<div class="a" style="left:643px;top:87px;width:365px;height:1px;background:#232527;"></div>
<div class="a" style="left:643px;top:119px;width:365px;height:1px;background:#232527;"></div>
<div class="a" style="left:643px;top:56px;width:365px;height:31px;background:#2E2F32;"></div>
<div class="a" style="left:643px;top:88px;width:365px;height:31px;background:#2E2F32;"></div>
<svg style="left:649px;top:63px" width="18" height="16" viewBox="0 0 18 16"><path d="M8.5 0L17 5L8.5 10L0 5Z" fill="#8CCBF5"/><path d="M1.5 8.5L8.5 12.8L15.5 8.5" stroke="#8CCBF5" stroke-width="2" fill="none"/></svg>
<svg style="left:672px;top:70px" width="6" height="4" viewBox="0 0 6 4"><path d="M0 0H6L3 4Z" fill="#A8A8A8"/></svg>
<svg style="left:688px;top:60px" width="2" height="24" viewBox="0 0 2 24"><path d="M0.5 0V24" stroke="#8A8C8E" stroke-width="1" stroke-dasharray="1 2"/></svg>
<svg style="left:733px;top:60px" width="2" height="24" viewBox="0 0 2 24"><path d="M0.5 0V24" stroke="#8A8C8E" stroke-width="1" stroke-dasharray="1 2"/></svg>
<svg style="left:695px;top:63px" width="17" height="16" viewBox="0 0 17 16"><rect x="4.5" y="1.5" width="8" height="13" rx="1.2" fill="none" stroke="#A8A8A8" stroke-width="1.2" transform="rotate(-40 8.5 8)"/><path d="M3 3A7.5 7.5 0 0 1 12 1M14 13A7.5 7.5 0 0 1 5 15" stroke="#A8A8A8" stroke-width="1" fill="none"/></svg>
<svg style="left:717px;top:70px" width="6" height="4" viewBox="0 0 6 4"><path d="M0 0H6L3 4Z" fill="#A8A8A8"/></svg>
<svg style="left:743px;top:63px" width="11" height="16" viewBox="0 0 11 16"><rect x="0.7" y="0.7" width="9.6" height="14.6" rx="1.8" fill="none" stroke="#A8A8A8" stroke-width="1.3"/><path d="M0.7 12H10.3" stroke="#A8A8A8" stroke-width="1.1"/></svg>
<svg style="left:817px;top:70px" width="6" height="4" viewBox="0 0 6 4"><path d="M0 0H6L3 4Z" fill="#A8A8A8"/></svg>
<svg style="left:851px;top:68px" width="9" height="6" viewBox="0 0 9 6"><path d="M0.5 0.5L3 3L0.5 5.5M4.5 0.5L7 3L4.5 5.5" stroke="#A8A8A8" stroke-width="1" fill="none"/></svg>
<svg style="left:872px;top:63px" width="16" height="16" viewBox="0 0 16 16"><circle cx="8" cy="8" r="7.3" stroke="#A8A8A8" stroke-width="1.4" fill="none"/><rect x="4" y="7" width="8" height="2" fill="#A8A8A8"/></svg>
<svg style="left:928px;top:63px" width="16" height="16" viewBox="0 0 16 16"><circle cx="8" cy="8" r="7.3" stroke="#A8A8A8" stroke-width="1.4" fill="none"/><rect x="4" y="7" width="8" height="2" fill="#A8A8A8"/><rect x="7" y="4" width="2" height="8" fill="#A8A8A8"/></svg>
<svg style="left:953px;top:63px" width="16" height="16" viewBox="0 0 16 16"><circle cx="8" cy="8" r="7.3" stroke="#A8A8A8" stroke-width="1.4" fill="none"/><rect x="4.8" y="4.8" width="6.4" height="6.4" fill="none" stroke="#A8A8A8" stroke-width="1.2"/><path d="M4.8 4.8H11.2V11.2Z" fill="#A8A8A8"/></svg>
<svg style="left:977px;top:60px" width="2" height="24" viewBox="0 0 2 24"><path d="M0.5 0V24" stroke="#8A8C8E" stroke-width="1" stroke-dasharray="1 2"/></svg>
<svg style="left:984px;top:64px" width="15" height="15" viewBox="0 0 15 15"><circle cx="7.5" cy="7.5" r="7" fill="#9A9A9A"/><rect x="6.4" y="3" width="2.2" height="6" fill="#2E3032"/><rect x="6.4" y="10.3" width="2.2" height="2" fill="#2E3032"/></svg>
<svg style="left:650px;top:97px" width="16" height="11" viewBox="0 0 16 11"><path d="M0.5 5.5C3 1 13 1 15.5 5.5C13 10 3 10 0.5 5.5Z" fill="#A8A8A8"/><circle cx="8" cy="5.5" r="2.8" fill="#2E3032"/><circle cx="8" cy="5.5" r="1.6" fill="#A8A8A8"/></svg>
<svg style="left:672px;top:104px" width="6" height="4" viewBox="0 0 6 4"><path d="M0 0H6L3 4Z" fill="#A8A8A8"/></svg>
<svg style="left:690px;top:96px" width="16" height="15" viewBox="0 0 16 15"><path d="M3 3V8A5 5 0 0 0 13 8V5" stroke="#A8A8A8" stroke-width="2.6" fill="none"/><path d="M1 1L15 14" stroke="#2E3032" stroke-width="2.5"/><path d="M1 1L15 14" stroke="#A8A8A8" stroke-width="1.2"/><rect x="11" y="1" width="3" height="3" fill="#6EC3F5"/></svg>
<svg style="left:711px;top:104px" width="36" height="8" viewBox="0 0 36 8"><path d="M0.5 0V6.5H35.5V0" stroke="#A8A8A8" stroke-width="1" fill="none"/></svg>
<svg style="left:749px;top:91px" width="2" height="24" viewBox="0 0 2 24"><path d="M0.5 0V24" stroke="#8A8C8E" stroke-width="1" stroke-dasharray="1 2"/></svg>
<svg style="left:756px;top:96px" width="17" height="13" viewBox="0 0 17 13"><path d="M2 11C5 11 5 2 9 2" stroke="#A8A8A8" stroke-width="1.4" fill="none"/><circle cx="2" cy="11" r="1.8" fill="#A8A8A8"/><circle cx="10" cy="2" r="1.8" fill="#A8A8A8"/><path d="M11 7.5L15.5 12M15.5 7.5L11 12" stroke="#E2517A" stroke-width="1.5"/></svg>
<svg style="left:782px;top:95px" width="15" height="15" viewBox="0 0 15 15"><path d="M1.5 13.5L9 6" stroke="#A8A8A8" stroke-width="2.4" stroke-linecap="round"/><path d="M11 1V3.5M14 4.5H11.5M13.5 1.5L12 3M9 2.5L10 3.5M13 7L12 6" stroke="#6EC3F5" stroke-width="1.1"/></svg>
<svg style="left:805px;top:91px" width="2" height="24" viewBox="0 0 2 24"><path d="M0.5 0V24" stroke="#8A8C8E" stroke-width="1" stroke-dasharray="1 2"/></svg>
<svg style="left:815px;top:96px" width="10" height="15" viewBox="0 0 10 15"><rect x="0" y="0" width="10" height="2" fill="#A8A8A8"/><rect x="0" y="13" width="10" height="2" fill="#A8A8A8"/><rect x="4" y="3.5" width="2" height="1.6" fill="#A8A8A8"/><rect x="4" y="6.7" width="2" height="1.6" fill="#A8A8A8"/><rect x="4" y="9.9" width="2" height="1.6" fill="#A8A8A8"/></svg>
<svg style="left:832px;top:104px" width="6" height="4" viewBox="0 0 6 4"><path d="M0 0H6L3 4Z" fill="#A8A8A8"/></svg>
<div class="a" style="left:1009px;top:56px;width:250px;height:31px;background:#303435;"></div>
<div class="a" style="left:1009px;top:87px;width:250px;height:1px;background:#232527;"></div>
<svg style="left:1162px;top:65px" width="15" height="15" viewBox="0 0 15 15"><circle cx="6.0" cy="6.0" r="4.8" stroke="#A8A8A8" stroke-width="1.9500000000000002" fill="none"/><path d="M9.45 9.45L14.25 14.25" stroke="#A8A8A8" stroke-width="2.4" stroke-linecap="round"/></svg>
<div class="a" style="left:1182px;top:59px;width:26px;height:25px;background:#4E5254;border-radius:4px;border:1px solid #5E6264"></div>
<svg style="left:1187px;top:65px" width="16" height="12" viewBox="0 0 16 12"><path d="M2 3.5H13M10 1L13 3.5L10 6M14 8.5H3M6 6L3 8.5L6 11" stroke="#E0E0E0" stroke-width="1.6" fill="none"/></svg>
<svg style="left:1212px;top:64px" width="20" height="13" viewBox="0 0 20 13"><rect x="5.3" y="0.3" width="2.4" height="2.6" fill="#A8A8A8" transform="rotate(0 6.5 6.5)"/><rect x="5.3" y="0.3" width="2.4" height="2.6" fill="#A8A8A8" transform="rotate(45 6.5 6.5)"/><rect x="5.3" y="0.3" width="2.4" height="2.6" fill="#A8A8A8" transform="rotate(90 6.5 6.5)"/><rect x="5.3" y="0.3" width="2.4" height="2.6" fill="#A8A8A8" transform="rotate(135 6.5 6.5)"/><rect x="5.3" y="0.3" width="2.4" height="2.6" fill="#A8A8A8" transform="rotate(180 6.5 6.5)"/><rect x="5.3" y="0.3" width="2.4" height="2.6" fill="#A8A8A8" transform="rotate(225 6.5 6.5)"/><rect x="5.3" y="0.3" width="2.4" height="2.6" fill="#A8A8A8" transform="rotate(270 6.5 6.5)"/><rect x="5.3" y="0.3" width="2.4" height="2.6" fill="#A8A8A8" transform="rotate(315 6.5 6.5)"/><circle cx="6.5" cy="6.5" r="4.3" fill="#A8A8A8"/><circle cx="6.5" cy="6.5" r="1.5" fill="#303435"/><path d="M14 5.5H19L16.5 8.5Z" fill="#A8A8A8"/></svg>
<svg style="left:1239px;top:64px" width="14" height="13" viewBox="0 0 14 13"><path d="M0 5H8M5.5 2.5L8 5L5.5 7.5" stroke="#A8A8A8" stroke-width="1.2" fill="none"/><rect x="10" y="0.5" width="3" height="12" fill="none" stroke="#A8A8A8" stroke-width="1.2"/></svg>
<div class="a" style="left:713px;top:219px;width:115px;height:191px;background:#FAFAFA;"></div>
<div class="a" style="left:713px;top:219px;width:115px;height:7px;background:#0E5E50;"></div>
<div class="a" style="left:713px;top:226px;width:115px;height:17px;background:#15877A;"></div>
<div class="a" style="left:713px;top:396px;width:115px;height:14px;background:#000000;"></div>
<div class="t" style="left:718px;top:232.26px;font-size:5.6px;color:#FFFFFF;font-weight:700;letter-spacing:0px;">GuidelineSample</div>
<svg style="left:805px;top:220px" width="22" height="6" viewBox="0 0 22 6"><path d="M0 1.2Q3 -0.5 6 1.2L3 5Z" fill="#fff"/><rect x="7.5" y="0.5" width="2.8" height="5" fill="#fff"/></svg>
<div class="t" style="left:812px;top:221.69px;font-size:4.5px;color:#E0F0EC;font-weight:700;letter-spacing:0px;">8:00</div>
<div class="a" style="left:755px;top:243px;width:31px;height:153px;background:transparent;border:1px solid #DCDCDC"></div>
<div class="a" style="left:755px;top:288px;width:31px;height:1px;background:#D8D8D8;"></div>
<div class="t" style="left:758px;top:245.19px;font-size:4.5px;color:#9A9A9A;font-weight:400;letter-spacing:0px;">top_side</div>
<div class="t" style="left:756px;top:289.19px;font-size:4.5px;color:#9A9A9A;font-weight:400;letter-spacing:0px;">bottom_side</div>
<svg style="left:728px;top:399px" width="45" height="8" viewBox="0 0 45 8"><path d="M4.5 1.5L2 4L4.5 6.5" stroke="#fff" stroke-width="1" fill="none"/><circle cx="42" cy="4" r="0" fill="#fff"/></svg>
<svg style="left:767px;top:399px" width="7" height="8" viewBox="0 0 7 8"><circle cx="3.5" cy="4" r="2.6" stroke="#fff" stroke-width="1" fill="none"/></svg>
<svg style="left:807px;top:399px" width="7" height="8" viewBox="0 0 7 8"><rect x="1" y="1.5" width="5" height="5" stroke="#fff" stroke-width="1" fill="none"/></svg>
<div class="a" style="left:837px;top:219px;width:115px;height:191px;background:#264C6C;"></div>
<div class="a" style="left:837px;top:243px;width:115px;height:153px;background:#27506F;border:1px solid #6AA7DE"></div>
<div class="a" style="left:878px;top:244px;width:31px;height:151px;background:#2B5F86;"></div>
<svg style="left:0px;top:0px" width="1" height="1" viewBox="0 0 1 1"><polyline points="877,245 880,246.7 877,248.39999999999998 880,250.09999999999997 877,251.79999999999995 880,253.49999999999994 877,255.19999999999993 880,256.8999999999999 877,258.5999999999999 880,260.2999999999999 877,261.9999999999999 880,263.6999999999999 877,265.39999999999986 880,267.09999999999985 877,268.79999999999984 880,270.49999999999983 877,272.1999999999998 880,273.8999999999998 877,275.5999999999998 880,277.2999999999998 877,278.9999999999998 880,280.69999999999976 877,282.39999999999975 880,284.09999999999974 877,285.7999999999997 880,287.4999999999997 877,289.1999999999997 880,290.8999999999997 877,292.5999999999997 880,294.29999999999967 877,295.99999999999966 880,297.69999999999965 877,299.39999999999964 880,301.0999999999996 877,302.7999999999996 880,304.4999999999996 877,306.1999999999996 880,307.8999999999996 877,309.59999999999957 880,311.29999999999956 877,312.99999999999955 880,314.69999999999953 877,316.3999999999995 880,318.0999999999995 877,319.7999999999995 880,321.4999999999995 877,323.1999999999995 880,324.89999999999947 877,326.59999999999945 880,328.29999999999944 877,329.99999999999943 880,331.6999999999994 877,333.3999999999994 880,335.0999999999994 877,336.7999999999994 880,338.4999999999994 877,340.19999999999936 880,341.89999999999935 877,343.59999999999934 880,345.29999999999933 877,346.9999999999993 880,348.6999999999993 877,350.3999999999993 880,352.0999999999993 877,353.7999999999993 880,355.49999999999926 877,357.19999999999925 880,358.89999999999924 877,360.5999999999992 880,362.2999999999992 877,363.9999999999992 880,365.6999999999992 877,367.3999999999992 880,369.09999999999917 877,370.79999999999916 880,372.49999999999915 877,374.19999999999914 880,375.8999999999991 877,377.5999999999991 880,379.2999999999991 877,380.9999999999991 880,382.6999999999991 877,384.39999999999907 880,386.09999999999906 877,387.79999999999905 880,389.49999999999903 877,391.199999999999 880,392.899999999999" stroke="#6AA7DE" stroke-width="1" fill="none"/></svg>
<svg style="left:0px;top:0px" width="1" height="1" viewBox="0 0 1 1"><polyline points="906,245 909,246.7 906,248.39999999999998 909,250.09999999999997 906,251.79999999999995 909,253.49999999999994 906,255.19999999999993 909,256.8999999999999 906,258.5999999999999 909,260.2999999999999 906,261.9999999999999 909,263.6999999999999 906,265.39999999999986 909,267.09999999999985 906,268.79999999999984 909,270.49999999999983 906,272.1999999999998 909,273.8999999999998 906,275.5999999999998 909,277.2999999999998 906,278.9999999999998 909,280.69999999999976 906,282.39999999999975 909,284.09999999999974 906,285.7999999999997 909,287.4999999999997 906,289.1999999999997 909,290.8999999999997 906,292.5999999999997 909,294.29999999999967 906,295.99999999999966 909,297.69999999999965 906,299.39999999999964 909,301.0999999999996 906,302.7999999999996 909,304.4999999999996 906,306.1999999999996 909,307.8999999999996 906,309.59999999999957 909,311.29999999999956 906,312.99999999999955 909,314.69999999999953 906,316.3999999999995 909,318.0999999999995 906,319.7999999999995 909,321.4999999999995 906,323.1999999999995 909,324.89999999999947 906,326.59999999999945 909,328.29999999999944 906,329.99999999999943 909,331.6999999999994 906,333.3999999999994 909,335.0999999999994 906,336.7999999999994 909,338.4999999999994 906,340.19999999999936 909,341.89999999999935 906,343.59999999999934 909,345.29999999999933 906,346.9999999999993 909,348.6999999999993 906,350.3999999999993 909,352.0999999999993 906,353.7999999999993 909,355.49999999999926 906,357.19999999999925 909,358.89999999999924 906,360.5999999999992 909,362.2999999999992 906,363.9999999999992 909,365.6999999999992 906,367.3999999999992 909,369.09999999999917 906,370.79999999999916 909,372.49999999999915 906,374.19999999999914 909,375.8999999999991 906,377.5999999999991 909,379.2999999999991 906,380.9999999999991 909,382.6999999999991 906,384.39999999999907 909,386.09999999999906 906,387.79999999999905 909,389.49999999999903 906,391.199999999999 909,392.899999999999" stroke="#6AA7DE" stroke-width="1" fill="none"/></svg>
<svg style="left:0px;top:0px" width="1" height="1" viewBox="0 0 1 1"><polyline points="843,265 845.5,268.5 848.0,261.5 850.5,268.5 853.0,261.5 855.5,268.5 858.0,261.5 860.5,268.5 863.0,261.5 865.5,268.5 868.0,261.5 869,268.5" stroke="#6AA7DE" stroke-width="1" fill="none"/><path d="M869 265H877" stroke="#6AA7DE"/><path d="M837 265L845 260V270Z" fill="#6AA7DE"/></svg>
<svg style="left:0px;top:0px" width="1" height="1" viewBox="0 0 1 1"><polyline points="916,265 918.5,268.5 921.0,261.5 923.5,268.5 926.0,261.5 928.5,268.5 931.0,261.5 933.5,268.5 936.0,261.5 938.5,268.5 941.0,261.5 943.5,268.5 944,261.5" stroke="#6AA7DE" stroke-width="1" fill="none"/><path d="M909 265H916" stroke="#6AA7DE"/><path d="M951 265L943 260V270Z" fill="#6AA7DE"/></svg>
<svg style="left:0px;top:0px" width="1" height="1" viewBox="0 0 1 1"><polyline points="843,341 845.5,344.5 848.0,337.5 850.5,344.5 853.0,337.5 855.5,344.5 858.0,337.5 860.5,344.5 863.0,337.5 865.5,344.5 868.0,337.5 869,344.5" stroke="#6AA7DE" stroke-width="1" fill="none"/><path d="M869 341H877" stroke="#6AA7DE"/><path d="M837 341L845 336V346Z" fill="#6AA7DE"/></svg>
<svg style="left:0px;top:0px" width="1" height="1" viewBox="0 0 1 1"><polyline points="916,341 918.5,344.5 921.0,337.5 923.5,344.5 926.0,337.5 928.5,344.5 931.0,337.5 933.5,344.5 936.0,337.5 938.5,344.5 941.0,337.5 943.5,344.5 944,337.5" stroke="#6AA7DE" stroke-width="1" fill="none"/><path d="M909 341H916" stroke="#6AA7DE"/><path d="M951 341L943 336V346Z" fill="#6AA7DE"/></svg>
<svg style="left:0px;top:0px" width="1" height="1" viewBox="0 0 1 1"><path d="M842 289.5H951" stroke="#6AA7DE" stroke-width="1" stroke-dasharray="3 2"/></svg>
<svg style="left:0px;top:0px" width="1" height="1" viewBox="0 0 1 1"><path d="M888 249L893 244L898 249Z" fill="#6AA7DE"/><path d="M888 283H898L893 289L898 295H888L893 289Z" fill="#6AA7DE"/><path d="M888 389H898L893 394Z" fill="#6AA7DE"/></svg>
<div class="t" style="left:830px;top:282.84px;font-size:12px;color:#D0D0D0;font-weight:400;letter-spacing:0px;">%</div>
<div style="position:absolute;left:0;top:0;z-index:10">
<svg style="left:0px;top:0px" width="1" height="1" viewBox="0 0 1 1"><path d="M672 197C667 182 662 165 652 152C640 136 624 124 610 115" stroke="#F8191E" stroke-width="14" stroke-linecap="round" fill="none"/><path d="M655 113L610 114L614 153" stroke="#F8191E" stroke-width="14" stroke-linecap="round" stroke-linejoin="round" fill="none"/></svg>
</div>
<svg style="left:1212px;top:545px" width="20" height="13" viewBox="0 0 20 13"><rect x="5.3" y="0.3" width="2.4" height="2.6" fill="#A8A8A8" transform="rotate(0 6.5 6.5)"/><rect x="5.3" y="0.3" width="2.4" height="2.6" fill="#A8A8A8" transform="rotate(45 6.5 6.5)"/><rect x="5.3" y="0.3" width="2.4" height="2.6" fill="#A8A8A8" transform="rotate(90 6.5 6.5)"/><rect x="5.3" y="0.3" width="2.4" height="2.6" fill="#A8A8A8" transform="rotate(135 6.5 6.5)"/><rect x="5.3" y="0.3" width="2.4" height="2.6" fill="#A8A8A8" transform="rotate(180 6.5 6.5)"/><rect x="5.3" y="0.3" width="2.4" height="2.6" fill="#A8A8A8" transform="rotate(225 6.5 6.5)"/><rect x="5.3" y="0.3" width="2.4" height="2.6" fill="#A8A8A8" transform="rotate(270 6.5 6.5)"/><rect x="5.3" y="0.3" width="2.4" height="2.6" fill="#A8A8A8" transform="rotate(315 6.5 6.5)"/><circle cx="6.5" cy="6.5" r="4.3" fill="#A8A8A8"/><circle cx="6.5" cy="6.5" r="1.5" fill="#3F4042"/><path d="M14 5.5H19L16.5 8.5Z" fill="#A8A8A8"/></svg>
<svg style="left:1240px;top:545px" width="13" height="14" viewBox="0 0 13 14"><path d="M6.5 0V7M4 4.5L6.5 7L9 4.5" stroke="#A8A8A8" stroke-width="1.2" fill="none"/><rect x="0" y="9" width="13" height="4" fill="#A8A8A8"/></svg>
<svg style="left:28px;top:572px" width="16" height="17" viewBox="0 0 16 17"><path d="M6 5.5L14 13.8" stroke="#2EAF5E" stroke-width="2.8" stroke-linecap="round"/><path d="M2 7.5Q4.5 3 9 1.3" stroke="#2EAF5E" stroke-width="3" stroke-linecap="round" fill="none"/></svg>
<svg style="left:26px;top:596px" width="23" height="1" viewBox="0 0 23 1"><path d="M0 0.5H23" stroke="#6A6C6E" stroke-dasharray="1 2"/></svg>
<svg style="left:29px;top:603px" width="15" height="15" viewBox="0 0 15 15"><path d="M1 0V15" stroke="#9A9A9A" stroke-width="1.2"/><rect x="3" y="1" width="3" height="1.5" fill="#E8A33D"/><rect x="3" y="4" width="3" height="1.5" fill="#E8A33D"/><path d="M1 14.5L14 1" stroke="#BBBBBB" stroke-width="1"/><text x="7" y="14" font-family="Liberation Sans" font-size="7" fill="#BBBBBB">ab</text></svg>
<svg style="left:26px;top:627px" width="23" height="1" viewBox="0 0 23 1"><path d="M0 0.5H23" stroke="#6A6C6E" stroke-dasharray="1 2"/></svg>
<svg style="left:28px;top:634px" width="16" height="16" viewBox="0 0 16 16"><path d="M1 15L6 10" stroke="#8A8A8A" stroke-width="1.4"/><path d="M5 8L8 11L10.5 8.5L7.5 5.5Z" fill="#8A8A8A"/><ellipse cx="10" cy="6" rx="5" ry="3" fill="#B58AD6" transform="rotate(-45 10 6)"/><circle cx="9.5" cy="6.5" r="1.8" fill="#7A6A8A"/></svg>
<svg style="left:30px;top:661px" width="12" height="12" viewBox="0 0 12 12"><path d="M1 1L11 11M11 1L1 11" stroke="#E05A4F" stroke-width="2"/></svg>
<svg style="left:56px;top:571px" width="10" height="8" viewBox="0 0 10 8"><path d="M0 0H10L5 8Z" fill="#9A9A9A"/></svg>
<svg style="left:75px;top:568px" width="13" height="13" viewBox="0 0 13 13"><circle cx="6" cy="7" r="6.1" fill="#72CC72"/><circle cx="6" cy="6" r="4.5" fill="#8ADB8A" opacity="0.6"/><text x="6" y="9" font-family="Liberation Sans" font-size="6" font-weight="bold" fill="#353535" text-anchor="middle">OK</text></svg>
<svg style="left:74px;top:590px" width="10" height="8" viewBox="0 0 10 8"><path d="M0 0H10L5 8Z" fill="#9A9A9A"/></svg>
<svg style="left:93px;top:587px" width="13" height="13" viewBox="0 0 13 13"><circle cx="6" cy="7" r="6.1" fill="#72CC72"/><circle cx="6" cy="6" r="4.5" fill="#8ADB8A" opacity="0.6"/><text x="6" y="9" font-family="Liberation Sans" font-size="6" font-weight="bold" fill="#353535" text-anchor="middle">OK</text></svg>
<svg style="left:93px;top:608px" width="8" height="10" viewBox="0 0 8 10"><path d="M0 0L8 5L0 10Z" fill="#9A9A9A"/></svg>
<svg style="left:111px;top:606px" width="13" height="13" viewBox="0 0 13 13"><circle cx="6" cy="7" r="6.1" fill="#72CC72"/><circle cx="6" cy="6" r="4.5" fill="#8ADB8A" opacity="0.6"/><text x="6" y="9" font-family="Liberation Sans" font-size="6" font-weight="bold" fill="#353535" text-anchor="middle">OK</text></svg>
<svg style="left:93px;top:627px" width="8" height="10" viewBox="0 0 8 10"><path d="M0 0L8 5L0 10Z" fill="#9A9A9A"/></svg>
<svg style="left:111px;top:625px" width="13" height="13" viewBox="0 0 13 13"><circle cx="6" cy="7" r="6.1" fill="#72CC72"/><circle cx="6" cy="6" r="4.5" fill="#8ADB8A" opacity="0.6"/><text x="6" y="9" font-family="Liberation Sans" font-size="6" font-weight="bold" fill="#353535" text-anchor="middle">OK</text></svg>
<svg style="left:111px;top:644px" width="13" height="13" viewBox="0 0 13 13"><circle cx="6" cy="7" r="6.1" fill="#72CC72"/><circle cx="6" cy="6" r="4.5" fill="#8ADB8A" opacity="0.6"/><text x="6" y="9" font-family="Liberation Sans" font-size="6" font-weight="bold" fill="#353535" text-anchor="middle">OK</text></svg>
<svg style="left:93px;top:665px" width="8" height="10" viewBox="0 0 8 10"><path d="M0 0L8 5L0 10Z" fill="#9A9A9A"/></svg>
<svg style="left:111px;top:663px" width="13" height="13" viewBox="0 0 13 13"><circle cx="6" cy="7" r="6.1" fill="#72CC72"/><circle cx="6" cy="6" r="4.5" fill="#8ADB8A" opacity="0.6"/><text x="6" y="9" font-family="Liberation Sans" font-size="6" font-weight="bold" fill="#353535" text-anchor="middle">OK</text></svg>
<svg style="left:93px;top:682px" width="13" height="13" viewBox="0 0 13 13"><circle cx="6" cy="7" r="6.1" fill="#72CC72"/><circle cx="6" cy="6" r="4.5" fill="#8ADB8A" opacity="0.6"/><text x="6" y="9" font-family="Liberation Sans" font-size="6" font-weight="bold" fill="#353535" text-anchor="middle">OK</text></svg>
<svg style="left:31px;top:762px" width="13" height="13" viewBox="0 0 13 13"><rect x="0.5" y="0.5" width="12" height="12" fill="#000" stroke="#8A8A8A"/><path d="M3 4L5.5 6.5L3 9M6.5 9.5H10" stroke="#fff" stroke-width="1" fill="none"/></svg>
<svg style="left:113px;top:762px" width="16" height="14" viewBox="0 0 16 14"><path d="M4 0V11M1 8L4 11.5L7 8" stroke="#4FAE4F" stroke-width="1.8" fill="none"/><text x="9" y="5" font-family="Liberation Sans" font-size="5" fill="#BBBBBB">01</text><text x="9" y="11" font-family="Liberation Sans" font-size="5" fill="#BBBBBB">10</text></svg>
<svg style="left:177px;top:765px" width="12" height="9" viewBox="0 0 12 9"><rect x="0" y="0" width="11" height="1.6" fill="#A8A8A8"/><rect x="0" y="3.5" width="7" height="1.6" fill="#A8A8A8"/><rect x="0" y="7" width="11" height="1.6" fill="#A8A8A8"/></svg>
<svg style="left:260px;top:766px" width="14" height="8" viewBox="0 0 14 8"><path d="M1 7.5A6 6 0 0 1 13 7.5" stroke="#A8A8A8" stroke-width="1.8" fill="none"/><path d="M6 7.5L10 3L8 8Z" fill="#A8A8A8"/></svg>
<svg style="left:337px;top:763px" width="13" height="14" viewBox="0 0 13 14"><g fill="#9A9A9A"><circle cx="6" cy="7" r="4.6"/><rect x="0" y="4" width="12" height="1.3"/><rect x="0" y="7" width="12" height="1.3"/><rect x="0" y="10" width="12" height="1.3"/></g><path d="M6 6L12.5 10L6 14Z" fill="#4FAE4F"/></svg>
<svg style="left:420px;top:763px" width="14" height="13" viewBox="0 0 14 13"><circle cx="4" cy="3.5" r="3.3" fill="#fff"/><path d="M2 3.5H6M2 2H6M2 5H6" stroke="#555" stroke-width="0.8"/><circle cx="8" cy="7" r="3.5" fill="#F2C48D"/><path d="M4.5 6A3.5 3 0 0 1 11.5 6" fill="#8A5A3A"/><rect x="4" y="10.5" width="8" height="2.5" fill="#3FA9E0"/></svg>
<svg style="left:1178px;top:763px" width="16" height="15" viewBox="0 0 16 15"><circle cx="7.5" cy="7" r="7" fill="#5FB85F"/><path d="M10 12L14.5 14.5L12 10Z" fill="#5FB85F"/><text x="7.5" y="10.5" font-family="Liberation Sans" font-size="10" font-weight="bold" fill="#1E3A1E" text-anchor="middle">1</text></svg>
<svg style="left:5px;top:783px" width="15" height="14" viewBox="0 0 15 14"><rect x="0.5" y="0.5" width="13" height="11" fill="#5A5D5F" stroke="#9A9A9A"/><path d="M0 13.5H14" stroke="#9A9A9A"/></svg>
<svg style="left:1237px;top:787px" width="10" height="10" viewBox="0 0 10 10"><path d="M1.5 4V2.5A2 2 0 0 1 5.5 2.5" stroke="#AFB1B3" stroke-width="1" fill="none"/><rect x="3.5" y="4.5" width="6" height="5" fill="none" stroke="#AFB1B3" stroke-width="1"/></svg>
<svg style="left:1260px;top:785px" width="13" height="13" viewBox="0 0 13 13"><path d="M3 3A3.5 2.5 0 0 1 10 3V5H3Z" fill="#5A5D5F"/><rect x="0" y="5" width="13" height="1.5" fill="#5A5D5F"/><path d="M2.5 7H10.5V10C10.5 12 2.5 12 2.5 10Z" fill="#5A5D5F"/></svg>
<svg style="left:492px;top:281px" width="16" height="3" viewBox="0 0 16 3"><g fill="#8A8C8E"><rect x="0" y="0" width="1" height="1"/><rect x="3" y="1.5" width="1" height="1"/><rect x="6" y="0" width="1" height="1"/><rect x="9" y="1.5" width="1" height="1"/><rect x="12" y="0" width="1" height="1"/><rect x="15" y="1.5" width="1" height="1"/></g></svg>
<div class="a" style="left:193px;top:775px;width:7px;height:1px;background:#BBBBBB;"></div>
<div class="a" style="left:353px;top:775px;width:7px;height:1px;background:#BBBBBB;"></div>
<div class="a" style="left:10px;top:83px;width:1px;height:0px;background:#fff;"></div>
</body></html>
